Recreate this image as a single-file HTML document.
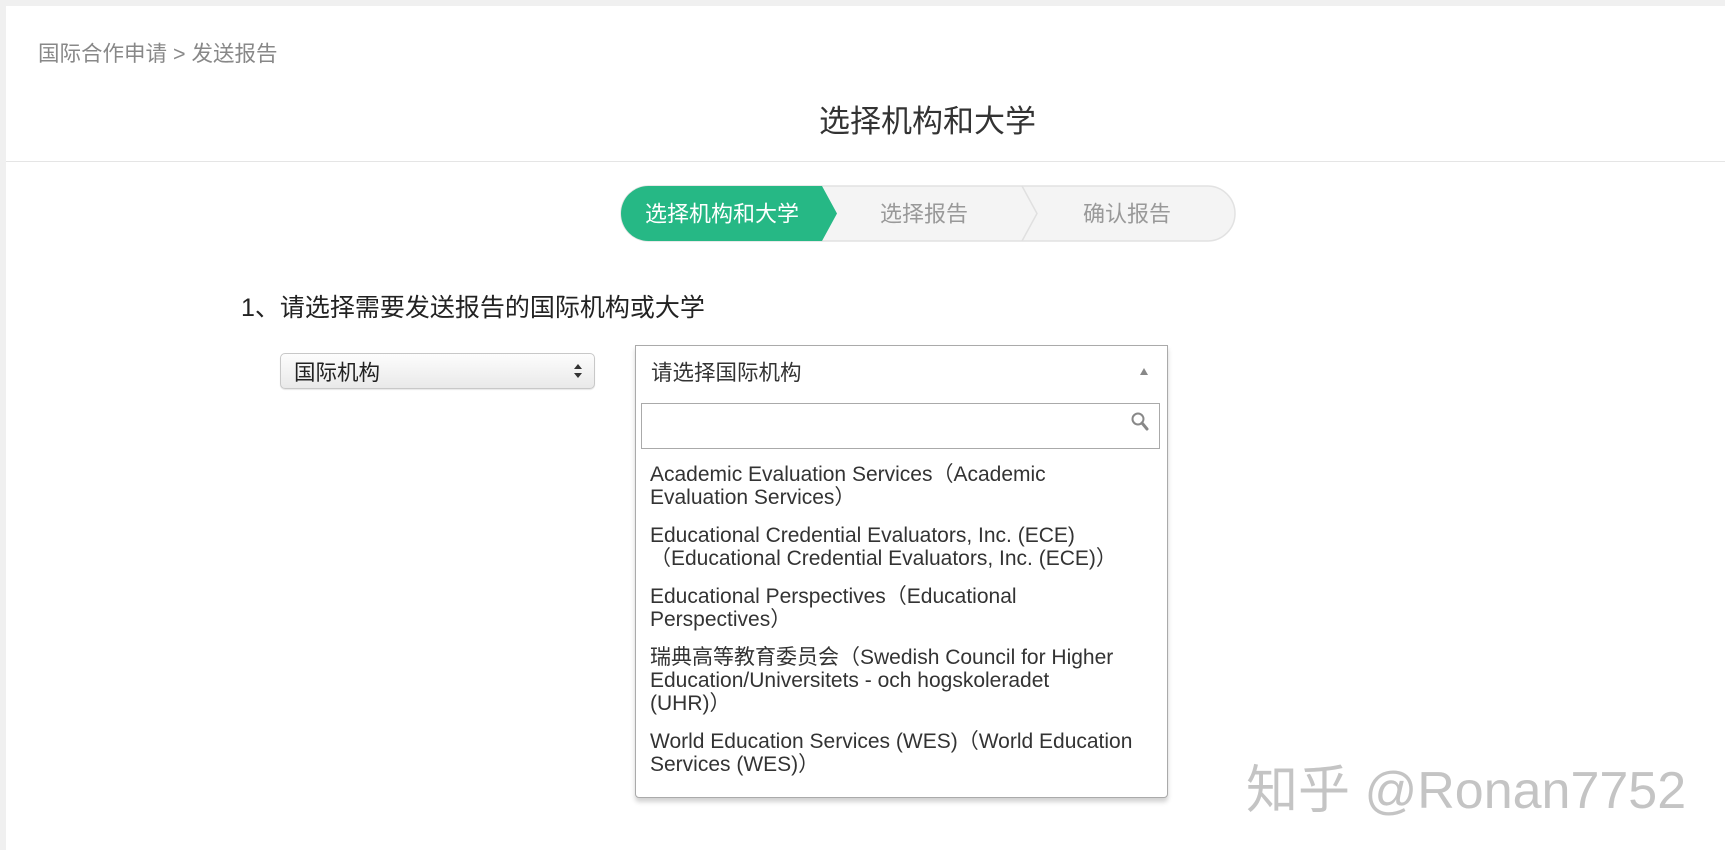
<!DOCTYPE html>
<html><head><meta charset="utf-8"><style>
*{margin:0;padding:0;box-sizing:border-box}
body{width:1725px;height:850px;background:#f0f0f0;font-family:"Liberation Sans","Noto Sans CJK SC",sans-serif;position:relative;overflow:hidden;color:#333}
.panel{position:absolute;left:6px;top:6px;width:1719px;height:844px;background:#fff}
.abs{position:absolute;white-space:nowrap}
</style></head><body>
<div class="panel"></div>
<div class="abs" style="left:38px;top:37px;font-size:21.5px;color:#888">国际合作申请 &gt; 发送报告</div>
<div class="abs" style="left:0;width:1855px;text-align:center;top:96px;font-size:31px;color:#333">选择机构和大学</div>
<div class="abs" style="left:6px;right:0;top:161px;height:1px;background:#e5e5e5"></div>

<svg class="abs" style="left:619px;top:184px" width="620" height="60" viewBox="0 0 620 60">
<rect x="2" y="2" width="614" height="55" rx="27.5" fill="#f4f4f4" stroke="#e2e2e2" stroke-width="1.5"/>
<path d="M29.5 2 H203 L218 29.5 L203 57 H29.5 A27.5 27.5 0 0 1 29.5 2 Z" fill="#26b885"/>
<path d="M403 2 L418 29.5 L403 57" fill="none" stroke="#e0e0e0" stroke-width="1.5"/>
<text x="103" y="37.5" text-anchor="middle" font-size="22" fill="#fff" font-family="Liberation Sans,Noto Sans CJK SC,sans-serif">选择机构和大学</text>
<text x="305" y="37.5" text-anchor="middle" font-size="22" fill="#999" font-family="Liberation Sans,Noto Sans CJK SC,sans-serif">选择报告</text>
<text x="508" y="37.5" text-anchor="middle" font-size="22" fill="#999" font-family="Liberation Sans,Noto Sans CJK SC,sans-serif">确认报告</text>
</svg>

<div class="abs" style="left:241px;top:288px;font-size:25px;color:#222">1、请选择需要发送报告的国际机构或大学</div>

<div class="abs" style="left:280px;top:353px;width:315px;height:36px;border:1px solid #c8c8c8;border-radius:5px;background:linear-gradient(#fdfdfd,#e9e9e9);box-shadow:0 1px 1px rgba(0,0,0,.1)"></div>
<div class="abs" style="left:294px;top:356px;font-size:21.5px;color:#222">国际机构</div>
<svg class="abs" style="left:573px;top:363px" width="10" height="16"><path d="M5 1 L9 6 H1 Z M5 15 L9 10 H1 Z" fill="#333"/></svg>

<div class="abs" style="left:635px;top:345px;width:533px;height:453px;border:1px solid #aaa;background:#fff;border-radius:0 0 4px 4px;box-shadow:0 4px 5px rgba(0,0,0,.18)"></div>
<div class="abs" style="left:651px;top:356px;font-size:21.5px;color:#333">请选择国际机构</div>
<svg class="abs" style="left:1139px;top:367px" width="10" height="9"><path d="M5 1 L9 8 H1 Z" fill="#888"/></svg>
<div class="abs" style="left:641px;top:403px;width:519px;height:46px;border:1px solid #aaa;background:#fff"></div>
<svg class="abs" style="left:1130px;top:411px" width="20" height="22"><circle cx="8" cy="8" r="5.5" fill="none" stroke="#888" stroke-width="2"/><path d="M12 12 L17 18" stroke="#888" stroke-width="3" stroke-linecap="round"/></svg>

<div class="abs" style="left:650px;top:463px;font-size:21px;line-height:23px;color:#333;width:520px;white-space:normal">
<div style="margin-bottom:15px">Academic Evaluation Services（Academic<br>Evaluation Services）</div>
<div style="margin-bottom:15px">Educational Credential Evaluators, Inc. (ECE)<br>（Educational Credential Evaluators, Inc. (ECE)）</div>
<div style="margin-bottom:15px">Educational Perspectives（Educational<br>Perspectives）</div>
<div style="margin-bottom:15px">瑞典高等教育委员会（Swedish Council for Higher<br>Education/Universitets - och hogskoleradet<br>(UHR)）</div>
<div>World Education Services (WES)（World Education<br>Services (WES)）</div>
</div>

<div class="abs" style="left:1246px;top:748px;font-size:52px;color:#c4c4c4;font-family:'Liberation Sans','Noto Sans CJK SC',sans-serif;text-shadow:0 0 2px #fff">知乎 @Ronan7752</div>
</body></html>
